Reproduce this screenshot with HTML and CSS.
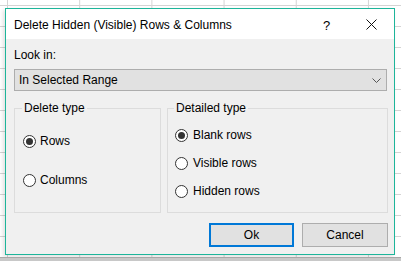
FILE: index.html
```html
<!DOCTYPE html>
<html>
<head>
<meta charset="utf-8">
<link rel="stylesheet" href="styles.css">
</head>
<body>
<div class="sheet">
  <div class="dialog">
    <div class="titlebar">
      <span class="title">Delete Hidden (Visible) Rows &amp; Columns</span>
      <span class="help">?</span>
      <svg class="close" width="11" height="11" viewBox="0 0 11 11"><path d="M0.5 0.5L10.5 10.5M10.5 0.5L0.5 10.5" stroke="#111" stroke-width="1" fill="none"/></svg>
    </div>
    <div class="content">
      <div class="label">Look in:</div>
      <div class="combo">
        <span>In Selected Range</span>
        <svg class="chev" width="9" height="5" viewBox="0 0 9 5"><path d="M0.5 0.5L4.5 4.5L8.5 0.5" stroke="#555" stroke-width="1" fill="none"/></svg>
      </div>
      <div class="groups">
        <div class="group left">
          <span class="legend">Delete type</span>
          <div class="radio"><span class="dot on"></span>Rows</div>
          <div class="radio"><span class="dot"></span>Columns</div>
        </div>
        <div class="group right">
          <span class="legend">Detailed type</span>
          <div class="radio"><span class="dot on"></span>Blank rows</div>
          <div class="radio"><span class="dot"></span>Visible rows</div>
          <div class="radio"><span class="dot"></span>Hidden rows</div>
        </div>
      </div>
      <div class="buttons">
        <div class="btn ok">Ok</div>
        <div class="btn">Cancel</div>
      </div>
    </div>
  </div>
  <div class="bottomband"></div>
</div>
</body>
</html>
```
FILE: styles.css
```css
html, body {
  margin: 0;
  padding: 0;
}
body {
  width: 401px;
  height: 261px;
  overflow: hidden;
  font-family: "Liberation Sans", Arial, sans-serif;
  font-size: 12px;
  color: #000;
}
.sheet {
  width: 401px;
  height: 261px;
  background-color: #fff;
  background-image:
    linear-gradient(to right, #d4d4d4 1px, transparent 1px),
    linear-gradient(to bottom, #d4d4d4 1px, transparent 1px);
  background-size: 72.2px 21px, 72.2px 21px;
  background-position: 7px 0, 0 5px;
  display: flex;
  flex-direction: column;
}
.dialog {
  margin: 8px 0 0 5px;
  width: 390px;
  height: 247px;
  box-sizing: border-box;
  border: 1px solid #1db59a;
  background: #f0f0f0;
  box-shadow: -2px 2px 4px rgba(0,0,0,0.12);
  display: flex;
  flex-direction: column;
}
.titlebar {
  height: 30px;
  background: #fff;
  display: flex;
  align-items: center;
  padding-left: 8px;
  padding-top: 2px;
  box-sizing: border-box;
  flex-shrink: 0;
}
.title {
  flex: 1;
  white-space: nowrap;
}
.help {
  width: 6px;
  margin-right: 37px;
  font-size: 13px;
}
.close {
  margin-right: 17px;
  margin-bottom: 2px;
}
.content {
  padding: 0 6px 0 8px;
  display: flex;
  flex-direction: column;
}
.label {
  margin-top: 8px;
  height: 16px;
  line-height: 16px;
}
.combo {
  margin-top: 6px;
  margin-right: 1px;
  height: 22px;
  box-sizing: border-box;
  border: 1px solid #adadad;
  background: #e1e1e1;
  display: flex;
  align-items: center;
  padding-left: 4px;
  padding-right: 5px;
}
.combo span {
  flex: 1;
}
.groups {
  margin-top: 17px;
  display: flex;
  gap: 6px;
}
.group {
  position: relative;
  height: 105px;
  box-sizing: border-box;
  border: 1px solid #dcdcdc;
  display: flex;
  flex-direction: column;
}
.group.left {
  width: 147px;
  padding: 24px 0 0 8px;
  gap: 23px;
}
.group.right {
  flex: 1;
  padding: 18px 0 0 7px;
  gap: 12px;
}
.legend {
  position: absolute;
  top: -9px;
  left: 7px;
  padding: 0 2px;
  background: #f0f0f0;
  line-height: 16px;
}
.group.right .legend {
  left: 6px;
}
.radio {
  height: 16px;
  line-height: 16px;
  display: flex;
  align-items: center;
}
.dot {
  width: 13px;
  height: 13px;
  box-sizing: border-box;
  border: 1px solid #333;
  border-radius: 50%;
  background: #fff;
  margin-right: 4px;
  display: flex;
  align-items: center;
  justify-content: center;
}
.group.right .dot {
  margin-right: 5px;
}
.dot.on::after {
  content: "";
  width: 7px;
  height: 7px;
  border-radius: 50%;
  background: #333;
}
.buttons {
  margin-top: 10px;
  display: flex;
  justify-content: flex-end;
  gap: 8px;
}
.btn {
  width: 86px;
  height: 24px;
  box-sizing: border-box;
  border: 1px solid #adadad;
  background: #e1e1e1;
  display: flex;
  align-items: center;
  justify-content: center;
}
.btn.ok {
  width: 85px;
  border: 2px solid #0078d7;
}
.bottomband {
  margin-top: 2px;
  flex: 1;
  background: #c8c8c8;
  border-top: 1px solid #a8a8a8;
}
```
